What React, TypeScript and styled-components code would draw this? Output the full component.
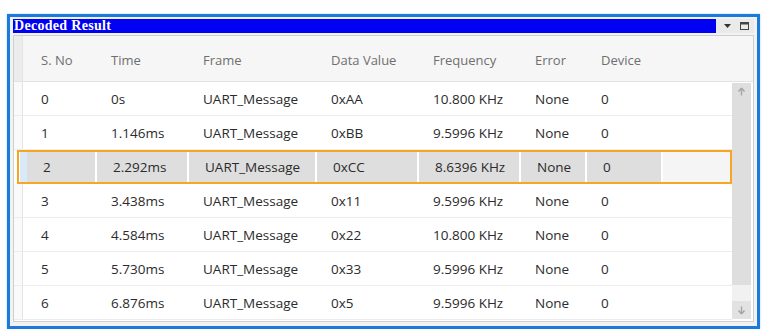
import React from "react";
import styled, { createGlobalStyle } from "styled-components";

const Global = createGlobalStyle`
  html, body { margin: 0; padding: 0; background: #ffffff; }
  body { font-family: "Open Sans", "Noto Sans", sans-serif; }
`;

const COLS = "70px 92px 128px 102px 102px 66px 76px 1fr";

const Page = styled.div`
  padding: 14px 0 0 7px;
`;

const Window = styled.div`
  width: 753px;
  height: 315px;
  box-sizing: border-box;
  border: 3px solid #1b7bdc;
  background: #f2f2f2;
  padding: 2px 3px 4px 3px;
  display: flex;
  flex-direction: column;
  gap: 2px;
  box-shadow: 0 0 2px rgba(27, 123, 220, 0.35);
`;

const TitleBar = styled.div`
  display: flex;
  height: 14px;
`;

const Title = styled.div`
  flex: 1;
  background: #0000f2;
  color: #ffffff;
  font-family: "Liberation Serif", "Times New Roman", serif;
  font-weight: bold;
  font-size: 14px;
  letter-spacing: 0.3px;
  line-height: 14px;
  padding-left: 1px;
  white-space: nowrap;
  overflow: hidden;
`;

const Controls = styled.div`
  width: 38px;
  background: #eaeaea;
  display: flex;
  align-items: center;
  justify-content: flex-end;
  gap: 9px;
  padding-right: 5px;
  box-sizing: border-box;
`;

const Panel = styled.div`
  flex: 1;
  border: 1px solid #cfcfcf;
  background: #ffffff;
  display: flex;
  flex-direction: column;
`;

const HeaderRow = styled.div`
  display: flex;
  height: 45px;
  background: #f6f6f6;
  border-bottom: 1px solid #e3e3e3;
`;

const Stripe = styled.div<{ $tone?: "head" | "row" }>`
  width: 9px;
  flex: none;
  margin-right: 2px;
  background: ${(p) => (p.$tone === "head" ? "#ececec" : "#fafafa")};
  border-right: 1px solid #e4e4e4;
  box-sizing: border-box;
`;

const Grid = styled.div<{ $head?: boolean }>`
  flex: 1;
  display: grid;
  grid-template-columns: ${COLS};
  align-items: center;
  padding-top: ${(p) => (p.$head ? "2px" : "0")};
`;

const HeadCell = styled.div`
  padding-left: 16px;
  font-size: 13px;
  color: #6f6f6f;
  white-space: nowrap;
`;

const Body = styled.div`
  flex: 1;
  display: flex;
`;

const Rows = styled.div`
  flex: 1;
  display: flex;
  flex-direction: column;
`;

const Row = styled.div`
  display: flex;
  height: 34px;
  box-sizing: border-box;
  border-bottom: 1px solid #ececec;
`;

const SelRow = styled.div`
  display: flex;
  height: 34px;
  box-sizing: border-box;
  margin-left: 3px;
  border: 2px solid #f6a623;
  background: #f5f5f5;
`;

const SelStripe = styled.div`
  width: 8px;
  flex: none;
  background: #d8eaf8;
  border-left: 1px solid #ffffff;
  box-sizing: border-box;
`;

const Cell = styled.div`
  padding-left: 16px;
  font-size: 13.5px;
  color: #2b2b2b;
  white-space: nowrap;
`;

const SelGrid = styled.div`
  flex: 1;
  display: grid;
  grid-template-columns: ${COLS};
  align-items: stretch;
`;

const SelCell = styled.div<{ $last?: boolean }>`
  padding-left: 16px;
  font-size: 13.5px;
  color: #2b2b2b;
  white-space: nowrap;
  display: flex;
  align-items: center;
  background: ${(p) => (p.$last ? "transparent" : "#dedede")};
  border-right: ${(p) => (p.$last ? "none" : "2px solid #ffffff")};
`;

const ScrollBar = styled.div`
  width: 19px;
  flex: none;
  margin: 1px 2px 2px 0;
  display: flex;
  flex-direction: column;
  background: #f1f1f1;
`;

const Thumb = styled.div`
  height: 202px;
  background: #dedede;
  display: flex;
  justify-content: center;
  padding-top: 4px;
  box-sizing: border-box;
`;

const Spacer = styled.div`
  flex: 1;
`;

const ArrowBox = styled.div`
  height: 18px;
  background: #e2e2e2;
  display: flex;
  align-items: center;
  justify-content: center;
`;

const headers = ["S. No", "Time", "Frame", "Data Value", "Frequency", "Error", "Device"];

const data: string[][] = [
  ["0", "0s", "UART_Message", "0xAA", "10.800 KHz", "None", "0"],
  ["1", "1.146ms", "UART_Message", "0xBB", "9.5996 KHz", "None", "0"],
  ["2", "2.292ms", "UART_Message", "0xCC", "8.6396 KHz", "None", "0"],
  ["3", "3.438ms", "UART_Message", "0x11", "9.5996 KHz", "None", "0"],
  ["4", "4.584ms", "UART_Message", "0x22", "10.800 KHz", "None", "0"],
  ["5", "5.730ms", "UART_Message", "0x33", "9.5996 KHz", "None", "0"],
  ["6", "6.876ms", "UART_Message", "0x5", "9.5996 KHz", "None", "0"],
];

const UpArrow = () => (
  <svg width="9" height="9" viewBox="0 0 9 9">
    <path d="M4.5 1 L1.5 4.5 M4.5 1 L7.5 4.5 M4.5 1 V8.5" stroke="#a5a5a5" strokeWidth="1.4" fill="none" />
  </svg>
);

const DownArrow = () => (
  <svg width="9" height="9" viewBox="0 0 9 9">
    <path d="M4.5 8 L1.5 4.5 M4.5 8 L7.5 4.5 M4.5 8 V0.5" stroke="#a5a5a5" strokeWidth="1.4" fill="none" />
  </svg>
);

export default function App() {
  const selected = 2;
  return (
    <>
      <Global />
      <Page>
        <Window>
          <TitleBar>
            <Title>Decoded Result</Title>
            <Controls>
              <svg width="7" height="4" viewBox="0 0 7 4">
                <path d="M0 0 H7 L3.5 4 Z" fill="#333" />
              </svg>
              <svg width="9" height="8" viewBox="0 0 9 8">
                <rect x="0.5" y="0.5" width="8" height="7" fill="none" stroke="#444" strokeWidth="1" />
                <rect x="0.5" y="0.5" width="8" height="2" fill="#444" />
              </svg>
            </Controls>
          </TitleBar>
          <Panel>
            <HeaderRow>
              <Stripe $tone="head" />
              <Grid $head>
                {headers.map((h) => (
                  <HeadCell key={h}>{h}</HeadCell>
                ))}
                <div />
              </Grid>
            </HeaderRow>
            <Body>
              <Rows>
                {data.map((r, i) =>
                  i === selected ? (
                    <SelRow key={i}>
                      <SelStripe />
                      <SelGrid>
                        {r.map((v, j) => (
                          <SelCell key={j}>{v}</SelCell>
                        ))}
                        <SelCell $last />
                      </SelGrid>
                    </SelRow>
                  ) : (
                    <Row key={i}>
                      <Stripe $tone="row" />
                      <Grid>
                        {r.map((v, j) => (
                          <Cell key={j}>{v}</Cell>
                        ))}
                        <div />
                      </Grid>
                    </Row>
                  )
                )}
              </Rows>
              <ScrollBar>
                <Thumb>
                  <UpArrow />
                </Thumb>
                <Spacer />
                <ArrowBox>
                  <DownArrow />
                </ArrowBox>
              </ScrollBar>
            </Body>
          </Panel>
        </Window>
      </Page>
    </>
  );
}
